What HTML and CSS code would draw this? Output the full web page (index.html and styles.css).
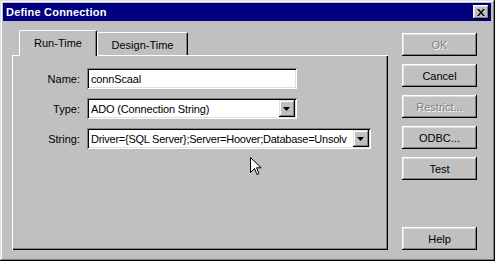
FILE: index.html
```html
<!DOCTYPE html>
<html>
<head>
<meta charset="utf-8">
<link rel="stylesheet" href="styles.css">
</head>
<body>
<div class="window">
  <div class="titlebar">
    <span class="title">Define Connection</span>
    <div class="close">
      <svg width="8" height="7" viewBox="0 0 8 7"><path d="M0 0h2l2 2.4 2-2.4h2l-3 3.5 3 3.5h-2l-2-2.4-2 2.4h-2l3-3.5z" fill="#000"/></svg>
    </div>
  </div>
  <div class="body">
    <div class="tabs-area">
      <div class="tabstrip">
        <div class="tab tab-active">Run-Time</div>
        <div class="tab tab-design">Design-Time</div>
      </div>
      <div class="panel">
        <div class="form">
          <label class="lbl">Name:</label>
          <div class="field field-name"><span class="val">connScaal</span></div>
          <label class="lbl">Type:</label>
          <div class="field field-type"><span class="val">ADO (Connection String)</span><span class="drop"><svg width="7" height="4" viewBox="0 0 7 4"><path d="M0 0h7L3.5 4z" fill="#000"/></svg></span></div>
          <label class="lbl">String:</label>
          <div class="field field-string"><span class="val val-tight">Driver={SQL Server};Server=Hoover;Database=Unsolv</span><span class="drop"><svg width="7" height="4" viewBox="0 0 7 4"><path d="M0 0h7L3.5 4z" fill="#000"/></svg></span></div>
        </div>
      </div>
    </div>
    <div class="buttons">
      <div class="btn disabled">OK</div>
      <div class="btn">Cancel</div>
      <div class="btn disabled">Restrict...</div>
      <div class="btn">ODBC...</div>
      <div class="btn">Test</div>
      <div class="btn help">Help</div>
    </div>
  </div>
  <svg class="cursor" width="12" height="19" viewBox="0 0 12 19"><path d="M0.5 0.5V15.5L4.5 11.5L7 17.5L9 16.7L6.5 10.8H11.2Z" fill="#fff" stroke="#000" stroke-width="1"/></svg>
</div>
</body>
</html>
```
FILE: styles.css
```css
html, body {
  margin: 0;
  padding: 0;
  background: #c0c0c0;
}
body {
  font-family: "Liberation Sans", Arial, sans-serif;
  font-size: 11px;
  color: #000;
}
.window {
  position: relative;
  width: 495px;
  height: 261px;
  box-sizing: border-box;
  padding: 3px 4px 4px 3px;
  background: #c0c0c0;
  box-shadow: inset -1px -1px #000, inset 1px 1px #dfdfdf, inset -2px -2px #808080, inset 2px 2px #fff;
}
.titlebar {
  height: 18px;
  background: #000080;
  display: flex;
  align-items: center;
  justify-content: space-between;
}
.title {
  color: #fff;
  font-weight: bold;
  font-size: 11px;
  padding-left: 3px;
  letter-spacing: 0.2px;
}
.close {
  width: 16px;
  height: 14px;
  margin-right: 2px;
  background: #c0c0c0;
  box-shadow: inset -1px -1px #000, inset 1px 1px #fff, inset -2px -2px #808080, inset 2px 2px #dfdfdf;
  display: flex;
  align-items: center;
  justify-content: center;
}
.close svg {
  margin-left: -1px;
}
.body {
  display: flex;
  padding: 9px 0 0 9px;
}
.tabs-area {
  width: 376px;
  display: flex;
  flex-direction: column;
}
.tabstrip {
  height: 25px;
  display: flex;
  align-items: flex-end;
  padding-left: 7px;
}
.tab {
  box-sizing: border-box;
  background: #c0c0c0;
  border-top: 1px solid #fff;
  border-left: 1px solid #fff;
  border-right: 1px solid #000;
  border-radius: 2px 2px 0 0;
  box-shadow: inset -1px 0 #808080;
  display: flex;
  align-items: center;
  justify-content: center;
}
.tab-active {
  position: relative;
  z-index: 1;
  width: 78px;
  height: 26px;
  margin-bottom: -1px;
  padding-bottom: 1px;
}
.tab-design {
  width: 91px;
  height: 23px;
  padding-top: 1px;
}
.panel {
  height: 195px;
  box-sizing: border-box;
  padding-top: 13px;
  box-shadow: inset 1px 1px #fff, inset -1px -1px #000, inset -2px -2px #808080;
}
.form {
  display: grid;
  grid-template-columns: 68px auto;
  column-gap: 7px;
  row-gap: 9px;
  align-items: center;
  justify-items: start;
}
.lbl {
  justify-self: end;
}
.field {
  height: 21px;
  box-sizing: border-box;
  background: #fff;
  box-shadow: inset 1px 1px #808080, inset -1px -1px #fff, inset 2px 2px #000, inset -2px -2px #dfdfdf;
  display: flex;
  align-items: center;
  padding: 2px 2px 2px 4px;
  overflow: hidden;
}
.val {
  flex: 1;
  white-space: nowrap;
  letter-spacing: -0.15px;
}
.val-tight {
  letter-spacing: -0.25px;
}
.field-name, .field-type {
  width: 210px;
}
.field-string {
  width: 284px;
}
.drop {
  flex: none;
  width: 16px;
  height: 17px;
  box-sizing: border-box;
  background: #c0c0c0;
  box-shadow: inset -1px -1px #000, inset 1px 1px #dfdfdf, inset -2px -2px #808080, inset 2px 2px #fff;
  display: flex;
  align-items: center;
  justify-content: center;
}
.drop svg {
  margin-left: -1px;
}
.buttons {
  margin-left: 14px;
  margin-top: 3px;
  width: 75px;
  display: flex;
  flex-direction: column;
  gap: 8px;
}
.btn {
  height: 23px;
  box-sizing: border-box;
  background: #c0c0c0;
  box-shadow: inset -1px -1px #000, inset 1px 1px #fff, inset -2px -2px #808080, inset 2px 2px #dfdfdf;
  display: flex;
  align-items: center;
  justify-content: center;
}
.btn.disabled {
  color: #808080;
  text-shadow: 1px 1px 0 #fff;
}
.btn.help {
  margin-top: auto;
}
.cursor {
  position: absolute;
  left: 250px;
  top: 157px;
}
```
